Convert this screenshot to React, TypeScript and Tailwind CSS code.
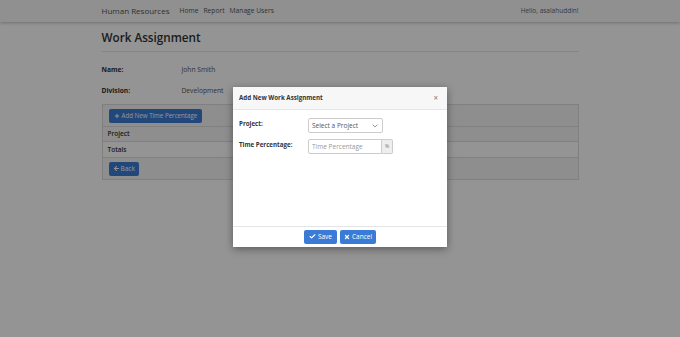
import { Plus, ArrowLeft, Check, X, ChevronDown } from "lucide-react"

export default function App() {
  return (
    <div className="relative h-[337px] w-[680px] overflow-hidden bg-white font-['Open_Sans',sans-serif] text-[#333]">
      {/* Navbar */}
      <nav className="h-[22px] bg-[#f8f8f8] shadow-[0_1px_3px_rgba(0,0,0,0.25)]">
        <div className="mx-auto flex h-full w-[477px] items-center">
          <span className="text-[8px] text-[#555]">Human Resources</span>
          <div className="ml-[10px] flex gap-[5px] text-[6.7px] text-[#555]">
            <span>Home</span>
            <span>Report</span>
            <span>Manage Users</span>
          </div>
          <span className="ml-auto text-[6.5px] text-[#666]">Hello, asalahuddin!</span>
        </div>
      </nav>

      {/* Page */}
      <div className="mx-auto w-[477px]">
        <h1 className="mt-[7px] pb-[5px] text-[11.7px] leading-[17px] font-semibold text-[#333]">Work Assignment</h1>
        <div className="border-t border-[#e5e5e5]" />

        <div className="mt-[13px] flex text-[6.7px] leading-[10px]">
          <span className="w-[80px] font-bold">Name:</span>
          <span className="text-[#555]">John Smith</span>
        </div>
        <div className="mt-[11px] flex text-[6.7px] leading-[10px]">
          <span className="w-[80px] font-bold">Division:</span>
          <span className="text-[#555]">Development</span>
        </div>

        <div className="mt-[8px] border border-[#ddd] text-[6.5px]">
          <div className="flex h-[22px] items-center border-b border-[#ddd] bg-[#f5f5f5] px-[6px]">
            <button className="flex h-[14px] items-center gap-[2px] rounded-[2px] bg-[#3a7bd5] px-[5px] text-[6.2px] text-white">
              <Plus className="h-[6px] w-[6px]" strokeWidth={4} />
              Add New Time Percentage
            </button>
          </div>
          <div className="flex h-[15px] items-center border-b border-[#ddd] bg-[#f5f5f5] px-[5px] font-semibold">
            Project
          </div>
          <div className="flex h-[16px] items-center border-b border-[#ddd] bg-white px-[5px] font-semibold">
            Totals
          </div>
          <div className="flex h-[21px] items-center bg-[#f5f5f5] px-[6px]">
            <button className="flex h-[14px] items-center gap-[1px] rounded-[2px] bg-[#3a7bd5] px-[4px] text-[6.5px] text-white">
              <ArrowLeft className="h-[7px] w-[7px]" strokeWidth={3.5} />
              Back
            </button>
          </div>
        </div>
      </div>

      {/* Modal backdrop */}
      <div className="absolute inset-0 bg-black/[0.42]">
        <div className="mx-auto mt-[87px] flex h-[160px] w-[214px] flex-col bg-white shadow-[0_2px_8px_rgba(0,0,0,0.4)]">
          <div className="flex h-[23px] items-center border-b border-[#e5e5e5] bg-[#f7f7f7] px-[6px]">
            <span className="text-[6.2px] font-bold text-[#333]">Add New Work Assignment</span>
            <span className="ml-auto mr-[3px] text-[8px] leading-none font-bold text-[#999]">×</span>
          </div>
          <div className="flex-1 px-[6px] pt-[9px] text-[6.2px]">
            <div className="flex items-start">
              <span className="w-[69px] font-bold">Project:</span>
              <div className="-mt-[1px] flex h-[15px] w-[75px] items-center rounded-[2px] border border-[#ccc] px-[3px] text-[6.5px] text-[#555]">
                Select a Project
                <ChevronDown className="ml-auto h-[8px] w-[8px] text-[#666]" strokeWidth={2} />
              </div>
            </div>
            <div className="mt-[7px] flex items-start">
              <span className="w-[69px] font-bold">Time Percentage:</span>
              <div className="-mt-[1px] flex h-[15px]">
                <div className="flex w-[74px] items-center rounded-l-[2px] border border-[#ccc] px-[3px] text-[6.5px] text-[#999]">
                  Time Percentage
                </div>
                <div className="flex w-[11px] items-center justify-center rounded-r-[2px] border border-l-0 border-[#ccc] bg-[#eee] text-[5px] text-[#777]">
                  %
                </div>
              </div>
            </div>
          </div>
          <div className="flex h-[21px] items-center justify-center gap-[3px] border-t border-[#e5e5e5] pb-[1px]">
            <button className="flex h-[14px] items-center gap-[2px] rounded-[2px] bg-[#3a7bd5] px-[5px] text-[6.5px] text-white">
              <Check className="h-[7px] w-[7px]" strokeWidth={4} />
              Save
            </button>
            <button className="flex h-[14px] items-center gap-[2px] rounded-[2px] bg-[#3a7bd5] px-[4px] text-[6.5px] text-white">
              <X className="h-[6px] w-[6px]" strokeWidth={5} />
              Cancel
            </button>
          </div>
        </div>
      </div>
    </div>
  )
}
